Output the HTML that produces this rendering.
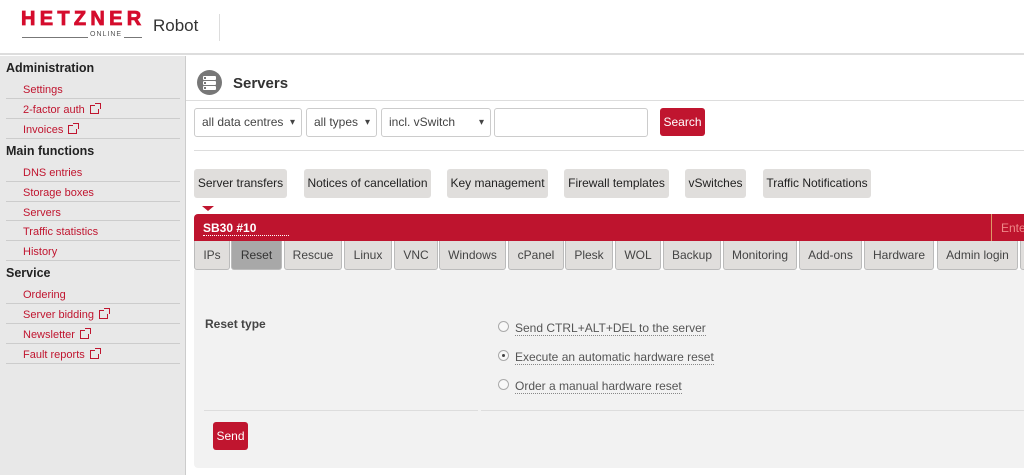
<!DOCTYPE html>
<html><head><style>
*{box-sizing:border-box;margin:0;padding:0}
body{width:1024px;height:475px;overflow:hidden;font-family:"Liberation Sans",Arial,sans-serif;font-size:12px;color:#333;background:#fff;position:relative}
.abs{position:absolute}
#hdr{left:0;top:0;width:1024px;height:55px;border-bottom:2px solid #ddd;background:#fff}
#side{left:0;top:56px;width:186px;height:419px;background:#e8e8e8;border-right:1px solid #ccc}
.h{position:absolute;left:6px;font-weight:bold;font-size:12.5px;color:#222}
.it{position:absolute;left:6px;width:174px;height:20px;border-top:1px solid #ccc;padding-left:17px;color:#c0152f;font-size:11px;line-height:22px}
.it.f{border-top:none}
.ext{display:inline-block;width:9px;height:9px;border:1px solid #c0152f;margin-left:5px;position:relative;top:1px}
.ext:after{content:"";position:absolute;right:-3px;top:-3px;width:5px;height:5px;border-top:1.5px solid #c0152f;border-right:1.5px solid #c0152f;background:#e8e8e8}
.sel{position:absolute;top:108px;height:29px;border:1px solid #ccc;border-radius:3px;background:#fff;font-size:12px;line-height:27px;padding-left:7px;color:#444}
.sel.a:after{content:"▾";position:absolute;right:6px;top:0;font-size:10px}
.btn{position:absolute;top:169px;height:29px;background:#e0dedc;border-radius:3px;line-height:29px;text-align:center;font-size:12px;color:#222}
.tab{position:absolute;top:241px;height:29px;background:#e0dedc;border:1px solid #bbb;border-top:none;border-radius:0 0 3px 3px;line-height:29px;text-align:center;font-size:12px;color:#444}
.r{position:absolute;left:498px;width:11px;height:11px;border-radius:50%;border:1px solid #aaa;background:#f8f8f8}
.rl{position:absolute;left:515px;font-size:12px;color:#555;border-bottom:1px dotted #888;line-height:14px}
</style></head><body>
<div id="hdr" class="abs">
  <div class="abs" style="left:21px;top:10px;color:#d50c2d;font-weight:900;font-size:20px;letter-spacing:4.3px;line-height:19px;-webkit-text-stroke:0.8px #d50c2d">HETZNER</div>
  <div class="abs" style="left:22px;top:37px;width:120px;border-top:1px solid #777;height:0"></div>
  <div class="abs" style="left:88px;top:31px;font-size:7px;color:#555;background:#fff;padding:0 2px;letter-spacing:1px">ONLINE</div>
  <div class="abs" style="left:153px;top:16px;font-size:17px;color:#333">Robot</div>
  <div class="abs" style="left:219px;top:14px;width:1px;height:27px;background:#ddd"></div>
</div>
<div id="side" class="abs">
  <div class="h" style="top:5px">Administration</div>
  <div class="it f" style="top:23px">Settings</div>
  <div class="it" style="top:42px">2-factor auth<span class="ext"></span></div>
  <div class="it" style="top:62px">Invoices<span class="ext"></span></div>
  <div class="it" style="top:82px;height:1px"></div>
  <div class="h" style="top:88px">Main functions</div>
  <div class="it f" style="top:106px">DNS entries</div>
  <div class="it" style="top:125px">Storage boxes</div>
  <div class="it" style="top:145px">Servers</div>
  <div class="it" style="top:164px">Traffic statistics</div>
  <div class="it" style="top:184px">History</div>
  <div class="it" style="top:204px;height:1px"></div>
  <div class="h" style="top:210px">Service</div>
  <div class="it f" style="top:228px">Ordering</div>
  <div class="it" style="top:247px">Server bidding<span class="ext"></span></div>
  <div class="it" style="top:267px">Newsletter<span class="ext"></span></div>
  <div class="it" style="top:287px">Fault reports<span class="ext"></span></div>
  <div class="it" style="top:307px;height:1px"></div>
</div>
<svg class="abs" style="left:197px;top:70px" width="25" height="25"><circle cx="12.5" cy="12.5" r="12.5" fill="#777"/><rect x="6" y="6" width="13" height="4" fill="#fff" rx="1"/><rect x="6" y="11" width="13" height="4" fill="#fff" rx="1"/><rect x="6" y="16" width="13" height="4" fill="#fff" rx="1"/><rect x="7" y="7" width="2" height="2" fill="#777"/><rect x="7" y="12" width="2" height="2" fill="#777"/><rect x="7" y="17" width="2" height="2" fill="#777"/></svg>
<div class="abs" style="left:233px;top:75px;font-size:15px;font-weight:bold;color:#333">Servers</div>
<div class="abs" style="left:186px;top:100px;width:838px;height:1px;background:#ddd"></div>
<div class="sel a" style="left:194px;width:108px">all data centres</div>
<div class="sel a" style="left:306px;width:71px">all types</div>
<div class="sel a" style="left:381px;width:110px">incl. vSwitch</div>
<div class="sel" style="left:494px;width:154px;padding:0"></div>
<div class="abs" style="left:660px;top:108px;width:45px;height:28px;background:#c0152f;border-radius:3px;color:#fff;text-align:center;line-height:28px">Search</div>
<div class="abs" style="left:194px;top:150px;width:830px;height:1px;background:#ddd"></div>
<div class="btn" style="left:194px;width:93px">Server transfers</div>
<div class="btn" style="left:304px;width:127px">Notices of cancellation</div>
<div class="btn" style="left:447px;width:101px">Key management</div>
<div class="btn" style="left:564px;width:105px">Firewall templates</div>
<div class="btn" style="left:685px;width:61px">vSwitches</div>
<div class="btn" style="left:763px;width:108px">Traffic Notifications</div>
<div class="abs" style="left:202px;top:206px;width:0;height:0;border-left:6px solid transparent;border-right:6px solid transparent;border-top:5px solid #c0152f"></div>
<div class="abs" style="left:194px;top:214px;width:830px;height:27px;background:#be142e;border-radius:4px 0 0 0"></div>
<div class="abs" style="left:203px;top:221px;color:#fff;font-weight:bold;font-size:12px;border-bottom:1px dotted #fff;width:86px;line-height:14px">SB30 #10</div>
<div class="abs" style="left:991px;top:214px;width:1px;height:27px;background:#d96"></div>
<div class="abs" style="left:1001px;top:221px;color:#e88;font-size:12px">Ente</div>
<div class="abs" style="left:194px;top:270px;width:830px;height:198px;background:#f2f2f2;border-radius:0 0 0 4px"></div>
<div class="tab" style="left:194px;width:36px">IPs</div>
<div class="tab" style="left:231px;width:51px;background:#a8a8a8;color:#333">Reset</div>
<div class="tab" style="left:284px;width:58px">Rescue</div>
<div class="tab" style="left:344px;width:48px">Linux</div>
<div class="tab" style="left:394px;width:44px">VNC</div>
<div class="tab" style="left:439px;width:67px">Windows</div>
<div class="tab" style="left:508px;width:56px">cPanel</div>
<div class="tab" style="left:565px;width:48px">Plesk</div>
<div class="tab" style="left:615px;width:46px">WOL</div>
<div class="tab" style="left:663px;width:58px">Backup</div>
<div class="tab" style="left:723px;width:74px">Monitoring</div>
<div class="tab" style="left:799px;width:63px">Add-ons</div>
<div class="tab" style="left:864px;width:70px">Hardware</div>
<div class="tab" style="left:937px;width:81px">Admin login</div>
<div class="tab" style="left:1020px;width:10px"></div>
<div class="abs" style="left:205px;top:317px;font-weight:bold;color:#444">Reset type</div>
<div class="r" style="top:321px"></div><div class="rl" style="top:321px">Send CTRL+ALT+DEL to the server</div>
<div class="r" style="top:350px"><div style="position:absolute;left:3px;top:3px;width:3px;height:3px;border-radius:50%;background:#444"></div></div><div class="rl" style="top:350px">Execute an automatic hardware reset</div>
<div class="r" style="top:379px"></div><div class="rl" style="top:379px">Order a manual hardware reset</div>
<div class="abs" style="left:204px;top:410px;width:274px;height:1px;background:#ddd"></div>
<div class="abs" style="left:481px;top:410px;width:543px;height:1px;background:#ddd"></div>
<div class="abs" style="left:213px;top:422px;width:35px;height:28px;background:#c0152f;border-radius:3px;color:#fff;text-align:center;line-height:28px">Send</div>
</body></html>
